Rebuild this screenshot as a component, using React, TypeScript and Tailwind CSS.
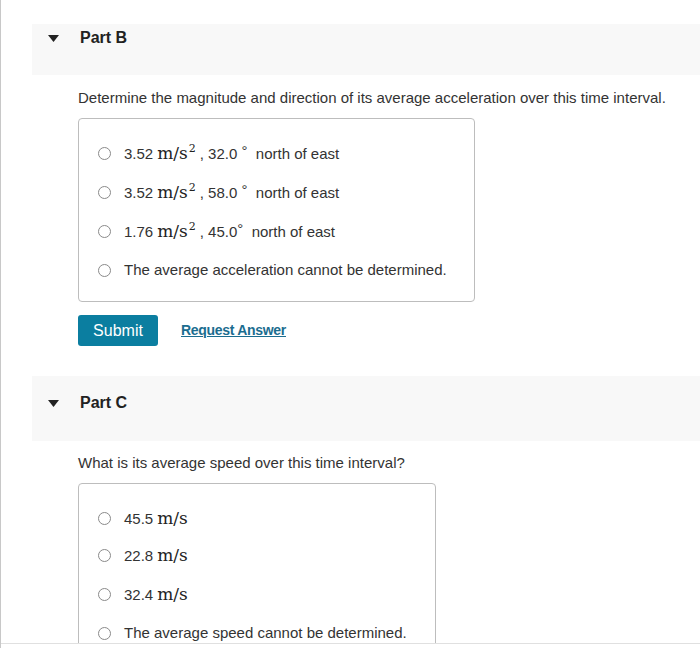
import React from "react";

const sans = { fontFamily: '"Liberation Sans", Arial, sans-serif' };

function Tri() {
  return (
    <svg width="11" height="7" viewBox="0 0 11 7" className="block">
      <path d="M0 0 L11 0 L5.5 7 Z" fill="#222" />
    </svg>
  );
}

function Radio() {
  return (
    <span className="inline-block w-[13px] h-[13px] rounded-full border-[1.5px] border-[#8a8a8a] bg-white shrink-0" />
  );
}

function MS({ sq }: { sq?: boolean }) {
  return (
    <span
      className="text-[#222] ml-[4px] mr-[4px] inline-flex items-baseline"
      style={{ fontFamily: '"DejaVu Serif", "Liberation Serif", serif', fontSize: 17 }}
    >
      m/s{sq ? <span className="text-[11px] ml-[1px] relative -top-[7px]">2</span> : null}
    </span>
  );
}

function Deg() {
  return <span className="relative -top-[3px] text-[15px]">°</span>;
}

function Opt({ children }: { children: React.ReactNode }) {
  return (
    <div className="flex items-center h-[39px] pl-[19px]">
      <Radio />
      <div className="ml-[13px] flex items-baseline text-[15px] text-[#333] whitespace-pre">{children}</div>
    </div>
  );
}

export default function App() {
  return (
    <div
      className="w-[700px] h-[648px] overflow-hidden bg-white border-l border-[#c8c8c8] relative"
      style={sans}
    >
      <div className="pt-[24px]">
        {/* Part B header */}
        <div className="ml-[31px] h-[51px] bg-[#f8f8f8] flex items-start pt-[4px]">
          <div className="flex items-center h-[18px] mt-[1px]">
            <div className="ml-[16px] w-[11px]">
              <Tri />
            </div>
            <div className="ml-[21px] text-[16px] font-bold text-[#222] leading-[18px]">Part B</div>
          </div>
        </div>
        <div className="pl-[77px]">
          <div className="mt-[13px] h-[20px] leading-[20px] text-[15px] text-[#333]">
            Determine the magnitude and direction of its average acceleration over this time interval.
          </div>
          <div className="mt-[10px] w-[397px] h-[184px] border border-[#bdbdbd] rounded-[4px] pt-[15px]">
            <Opt>
              3.52<MS sq />, 32.0 <Deg />  north of east
            </Opt>
            <Opt>
              3.52<MS sq />, 58.0 <Deg />  north of east
            </Opt>
            <Opt>
              1.76<MS sq />, 45.0<Deg />  north of east
            </Opt>
            <Opt>The average acceleration cannot be determined.</Opt>
          </div>
          <div className="mt-[13px] flex items-center">
            <button className="w-[80px] h-[31px] rounded-[3px] bg-[#0b7ea0] text-white text-[16px]">
              Submit
            </button>
            <span className="ml-[23px] text-[14px] font-bold text-[#1b6d8f] underline tracking-[-0.3px]">
              Request Answer
            </span>
          </div>
        </div>

        {/* Part C header */}
        <div className="mt-[30px] ml-[31px] h-[65px] bg-[#f8f8f8] flex items-start pt-[17px]">
          <div className="flex items-center h-[18px] mt-[1px]">
            <div className="ml-[16px] w-[11px]">
              <Tri />
            </div>
            <div className="ml-[21px] text-[16px] font-bold text-[#222] leading-[18px]">Part C</div>
          </div>
        </div>
        <div className="pl-[77px]">
          <div className="mt-[12px] h-[20px] leading-[20px] text-[15px] text-[#333]">
            What is its average speed over this time interval?
          </div>
          <div className="mt-[10px] w-[358px] h-[200px] border border-[#bdbdbd] rounded-[4px] pt-[15px]">
            <div className="flex flex-col gap-0">
              <div className="h-[37px]"><Opt>45.5<MS /></Opt></div>
              <div className="h-[39px]"><Opt>22.8<MS /></Opt></div>
              <div className="h-[39px]"><Opt>32.4<MS /></Opt></div>
              <Opt>The average speed cannot be determined.</Opt>
            </div>
          </div>
        </div>
      </div>
      <div className="absolute left-0 right-0 top-[643px] h-[5px] bg-white border-t border-[#e0e0e0]" />
    </div>
  );
}
